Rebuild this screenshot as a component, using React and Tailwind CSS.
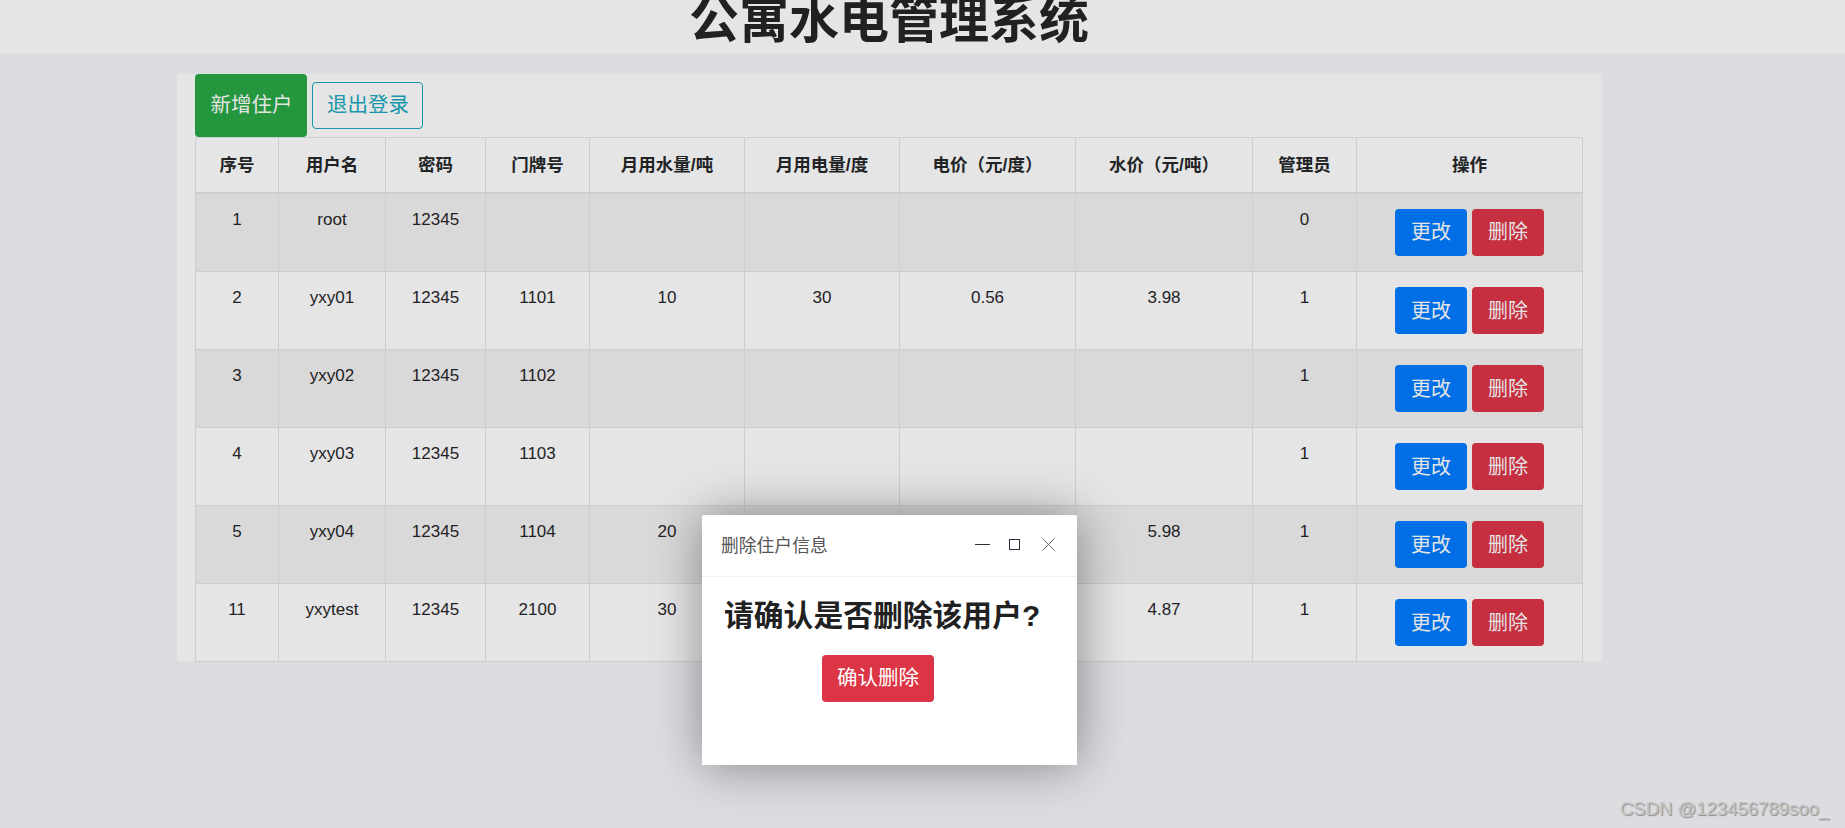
import React from "react";

const FONT = "[font-family:'Liberation_Sans','Noto_Sans_CJK_SC',sans-serif]";
const headers = ["序号", "用户名", "密码", "门牌号", "月用水量/吨", "月用电量/度", "电价（元/度）", "水价（元/吨）", "管理员", "操作"];
const widths = [83, 107, 100, 104, 155, 155, 176, 177, 104, 226];
const rows = [
  ["1", "root", "12345", "", "", "", "", "", "0"],
  ["2", "yxy01", "12345", "1101", "10", "30", "0.56", "3.98", "1"],
  ["3", "yxy02", "12345", "1102", "", "", "", "", "1"],
  ["4", "yxy03", "12345", "1103", "", "", "", "", "1"],
  ["5", "yxy04", "12345", "1104", "20", "", "", "5.98", "1"],
  ["11", "yxytest", "12345", "2100", "30", "", "", "4.87", "1"],
];

export default function App() {
  return (
    <div className={`relative h-[828px] w-full overflow-hidden bg-[#dcdde1] text-[#1f2225] ${FONT}`}>
      <header className="h-[53px] overflow-hidden bg-[#e5e5e5] pr-[67px] text-center">
        <h1 className="text-[50px] font-bold leading-[42px] text-[#212121]">公寓水电管理系统</h1>
      </header>

      <main className="ml-[177px] mt-[21px] h-[587px] w-[1425px] bg-[#e5e5e5] pl-[18px]">
        <div className="flex h-[63px] items-center gap-[5px]">
          <button className="h-[63px] w-[112px] rounded-[4px] bg-[#24963e] pl-[1px] text-[20.5px] text-[#e5e5e5]">新增住户</button>
          <button className="h-[47px] w-[111px] rounded-[4px] border border-[#1596ab] pl-[1px] text-[20.5px] text-[#1596ab]">退出登录</button>
        </div>

        <table className="w-[1387px] table-fixed border-collapse text-center">
          <colgroup>
            {widths.map((w, i) => (
              <col key={i} style={{ width: w }} />
            ))}
          </colgroup>
          <thead>
            <tr className="h-[55px]">
              {headers.map((h) => (
                <th key={h} className="border border-b-2 border-[#cbcdd0] text-[17.5px] font-bold text-[#212325]">{h}</th>
              ))}
            </tr>
          </thead>
          <tbody>
            {rows.map((r, i) => (
              <tr key={i} className={i === 0 ? "h-[79px] bg-[#d9d9d9]" : i % 2 === 0 ? "h-[78px] bg-[#d9d9d9]" : "h-[78px]"}>
                {r.map((c, j) => (
                  <td key={j} className="border border-[#cbcdd0] px-0 pb-0 pt-[13px] align-top text-[17px] leading-[26px]">{c}</td>
                ))}
                <td className="border border-[#cbcdd0] align-middle">
                  <div className="flex justify-center gap-[5px]">
                    <button className="h-[47px] w-[72px] rounded-[4px] bg-[#006fe6] text-[20px] text-[#e5e5e5]">更改</button>
                    <button className="h-[47px] w-[72px] rounded-[4px] bg-[#c52f40] text-[20px] text-[#e5e5e5]">删除</button>
                  </div>
                </td>
              </tr>
            ))}
          </tbody>
        </table>
      </main>

      <section className="absolute left-[702px] top-[515px] h-[250px] w-[375px] rounded-t-[2px] bg-white shadow-[1px_1px_50px_rgba(0,0,0,0.4)]">
        <div className="flex h-[62px] items-center border-b border-[#f0f0f0] pl-[19px]">
          <span className="pt-[2px] text-[17.8px] text-[#555]">删除住户信息</span>
          <svg className="absolute left-[270px] top-[20px]" width="90" height="20" viewBox="0 0 90 20" fill="none">
            <path d="M3 9.5H18" stroke="#2e2d3c" strokeWidth="1" />
            <rect x="37.5" y="4.5" width="10" height="10" stroke="#2e2d3c" strokeWidth="1" />
            <path d="M70.5 3.5L82.5 15.5M82.5 3.5L70.5 15.5" stroke="#666" strokeWidth="1" />
          </svg>
        </div>
        <h2 className="pl-[22px] pt-[14px] text-[29.8px] font-bold leading-[50px] text-[#212121]">请确认是否删除该用户?</h2>
        <button className="ml-[120px] mt-[14px] h-[47px] w-[112px] rounded-[4px] bg-[#dc3545] text-[20.5px] text-white">确认删除</button>
      </section>

      <div className="absolute right-[16px] top-[798px] text-[18.5px] leading-[22px] text-[#c4c4c4] [text-shadow:1px_1px_1px_#8a8a8a]">CSDN @123456789soo_</div>
    </div>
  );
}
